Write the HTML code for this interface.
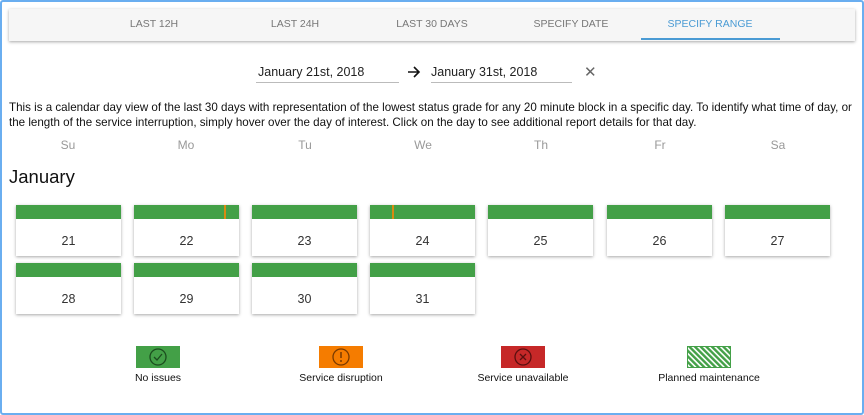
<!DOCTYPE html>
<html><head><style>
*{box-sizing:border-box;margin:0;padding:0}
body{width:864px;height:415px;overflow:hidden;background:#fff;font-family:"Liberation Sans",Arial,sans-serif;color:#222;position:relative}
.frame{position:absolute;left:0;top:0;width:864px;height:415px;border:2px solid #6aaef0;border-radius:3px}
.tabs{position:absolute;left:9px;top:9px;width:846px;height:32px;background:#f6f6f6;box-shadow:0 1px 3px rgba(0,0,0,.35)}
.tab{position:absolute;top:9px;font-size:10.5px;color:#777;width:140px;text-align:center;margin-left:-70px}
.ul{position:absolute;left:632px;top:29px;width:139px;height:2px;background:#4a9bd4}
.in{position:absolute;top:65px;font-size:12.5px;color:#222;border-bottom:1px solid #bbb;height:18px}
.p{position:absolute;left:9px;top:100px;font-size:11.6px;line-height:15px;width:860px;color:#111;white-space:nowrap}
.dh{position:absolute;top:138px;font-size:12px;color:#999;width:60px;margin-left:-30px;text-align:center}
.jan{position:absolute;left:9px;top:166px;font-size:18.5px;color:#111}
.card{position:absolute;width:105px;height:51px;background:#fff;box-shadow:0 1px 3px rgba(0,0,0,.35)}
.card .g{height:14px;background:#43a047;position:relative}
.card .n{text-align:center;font-size:12.5px;color:#333;margin-top:15px}
.o{position:absolute;top:0;width:1.5px;height:14px;background:#d88a10}
.lb{position:absolute;top:346px;width:44px;height:22px}
.lt{position:absolute;top:372px;font-size:10.5px;width:160px;margin-left:-80px;text-align:center;color:#111}
</style></head><body>
<div class="tabs">
<div class="tab" style="left:145px">LAST 12H</div>
<div class="tab" style="left:286px">LAST 24H</div>
<div class="tab" style="left:423px">LAST 30 DAYS</div>
<div class="tab" style="left:562px">SPECIFY DATE</div>
<div class="tab" style="left:701px;color:#4a9bd4">SPECIFY RANGE</div>
<div class="ul"></div>
</div>
<div class="in" style="left:256px;width:143px;padding-left:2px">January 21st, 2018</div>
<svg style="position:absolute;left:407px;top:66px" width="14" height="12" viewBox="0 0 14 12"><path d="M1 6h11M7 1l5 5-5 5" fill="none" stroke="#111" stroke-width="1.6"/></svg>
<div class="in" style="left:431px;width:141px">January 31st, 2018</div>
<div style="position:absolute;left:584px;top:63px;font-size:15px;color:#666">&#10005;</div>
<div class="p">This is a calendar day view of the last 30 days with representation of the lowest status grade for any 20 minute block in a specific day. To identify what time of day, or<br>the length of the service interruption, simply hover over the day of interest. Click on the day to see additional report details for that day.</div>
<div class="dh" style="left:68px">Su</div><div class="dh" style="left:186px">Mo</div><div class="dh" style="left:305px">Tu</div><div class="dh" style="left:423px">We</div><div class="dh" style="left:541px">Th</div><div class="dh" style="left:660px">Fr</div><div class="dh" style="left:778px">Sa</div>
<div class="jan">January</div>
<div class="card" style="left:16px;top:205px"><div class="g"></div><div class="n">21</div></div>
<div class="card" style="left:134px;top:205px"><div class="g"><div class="o" style="left:90px"></div></div><div class="n">22</div></div>
<div class="card" style="left:252px;top:205px"><div class="g"></div><div class="n">23</div></div>
<div class="card" style="left:370px;top:205px"><div class="g"><div class="o" style="left:22px"></div></div><div class="n">24</div></div>
<div class="card" style="left:488px;top:205px"><div class="g"></div><div class="n">25</div></div>
<div class="card" style="left:607px;top:205px"><div class="g"></div><div class="n">26</div></div>
<div class="card" style="left:725px;top:205px"><div class="g"></div><div class="n">27</div></div>
<div class="card" style="left:16px;top:263px"><div class="g"></div><div class="n">28</div></div>
<div class="card" style="left:134px;top:263px"><div class="g"></div><div class="n">29</div></div>
<div class="card" style="left:252px;top:263px"><div class="g"></div><div class="n">30</div></div>
<div class="card" style="left:370px;top:263px"><div class="g"></div><div class="n">31</div></div>
<svg class="lb" style="left:136px" viewBox="0 0 44 22"><rect width="44" height="22" fill="#43a047"/><circle cx="22" cy="11" r="8" fill="none" stroke="#1b4d1e" stroke-width="1.3"/><path d="M18 11l3 3 5-6" fill="none" stroke="#1b4d1e" stroke-width="1.3"/></svg>
<svg class="lb" style="left:319px" viewBox="0 0 44 22"><rect width="44" height="22" fill="#f57c00"/><circle cx="22" cy="11" r="8" fill="none" stroke="#7a3a00" stroke-width="1.3"/><path d="M22 6v6M22 14v2" stroke="#7a3a00" stroke-width="1.5"/></svg>
<svg class="lb" style="left:501px" viewBox="0 0 44 22"><rect width="44" height="22" fill="#c62828"/><circle cx="22" cy="11" r="8" fill="none" stroke="#5a0f0f" stroke-width="1.3"/><path d="M19 8l6 6M25 8l-6 6" stroke="#5a0f0f" stroke-width="1.3"/></svg>
<svg class="lb" style="left:687px" viewBox="0 0 44 22"><defs><pattern id="h" width="4" height="4" patternUnits="userSpaceOnUse" patternTransform="rotate(-45)"><rect width="4" height="4" fill="#fff"/><rect width="2.4" height="4" fill="#43a047"/></pattern></defs><rect width="44" height="22" fill="url(#h)"/><rect x=".5" y=".5" width="43" height="21" fill="none" stroke="#43a047"/></svg>
<div class="lt" style="left:158px">No issues</div>
<div class="lt" style="left:341px">Service disruption</div>
<div class="lt" style="left:523px">Service unavailable</div>
<div class="lt" style="left:709px">Planned maintenance</div>
<div class="frame"></div>
</body></html>
